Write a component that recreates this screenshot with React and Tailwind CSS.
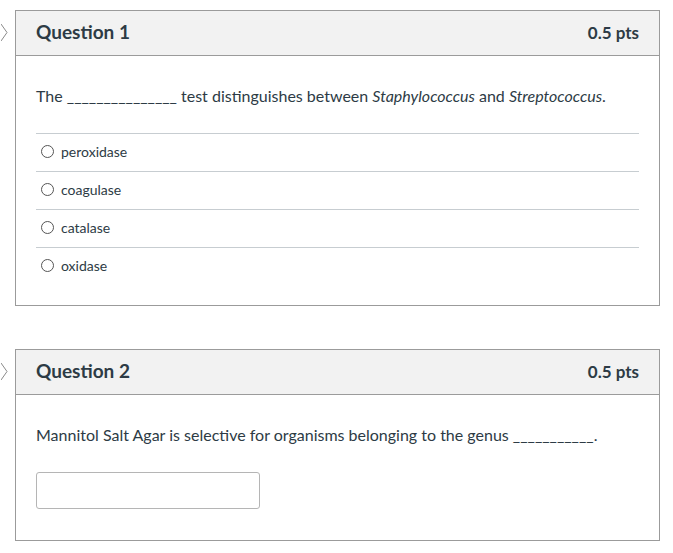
import React from 'react';

const answers = ['peroxidase', 'coagulase', 'catalase', 'oxidase'];

function Flag() {
  return (
    <svg width="8" height="20" viewBox="0 0 8 20" className="absolute -left-[15px] top-[12px]">
      <polyline points="0,1 6,9.5 0,18" fill="none" stroke="#8a8a8a" strokeWidth="1" />
    </svg>
  );
}

function QuestionCard({ title, pts, children }) {
  return (
    <div className="relative border border-[#9b9b9b]">
      <Flag />
      <div className="flex h-[45px] items-center justify-between border-b border-[#9b9b9b] bg-[#f2f2f2] pb-[1px] pl-[20px] pr-[20px]">
        <span className="text-[19px] font-bold text-[#2d3b45]">{title}</span>
        <span className="text-[17px] font-bold text-[#2d3b45]">{pts}</span>
      </div>
      {children}
    </div>
  );
}

export default function App() {
  return (
    <div className="min-h-[553px] bg-white pl-[15px] pr-[13px] pt-[10px]" style={{ fontFamily: 'Lato, "Liberation Sans", sans-serif' }}>
      <QuestionCard title="Question 1" pts="0.5 pts">
        <div className="px-[20px] pt-[29px] pb-[20px] text-[#2d3b45]">
          <p className="mb-[26px] text-[16px] leading-[22px]">
            The _______________ test distinguishes between <i>Staphylococcus</i> and <i>Streptococcus</i>.
          </p>
          {answers.map((a) => (
            <div key={a} className="flex h-[38px] items-center gap-[7px] border-t border-[#c7cdd1] pb-[3px] pl-[5px] text-[14px]">
              <span className="h-[13px] w-[13px] rounded-full border border-[#555]" />
              <span>{a}</span>
            </div>
          ))}
        </div>
      </QuestionCard>
      <div className="h-[43px]" />
      <QuestionCard title="Question 2" pts="0.5 pts">
        <div className="px-[20px] pt-[29px] pb-[31px] text-[#2d3b45]">
          <p className="mb-[26px] text-[16px] leading-[22px]">
            Mannitol Salt Agar is selective for organisms belonging to the genus ___________.
          </p>
          <div className="h-[37px] w-[224px] rounded-[3px] border border-[#b5b5b5] bg-white" />
        </div>
      </QuestionCard>
    </div>
  );
}
